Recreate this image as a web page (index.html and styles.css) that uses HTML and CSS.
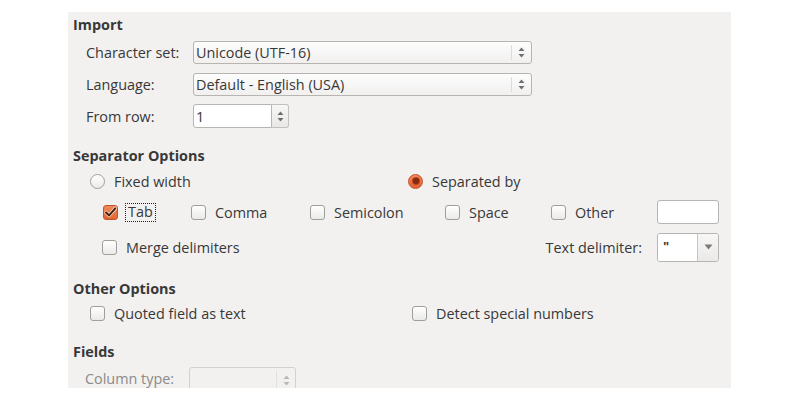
FILE: index.html
```html
<!DOCTYPE html>
<html>
<head>
<meta charset="utf-8">
<link rel="stylesheet" href="styles.css">
</head>
<body>
<div class="panel">
  <div class="heading">Import</div>
  <div class="form-row">
    <span class="label">Character set:</span>
    <div class="combo combo-wide">
      <span class="combo-text">Unicode (UTF-16)</span>
      <span class="combo-btn"><svg width="7" height="13" viewBox="0 0 7 13"><polygon points="0.5,5 3.5,1.5 6.5,5" fill="#6e6e6e"/><polygon points="0.5,8 3.5,11.5 6.5,8" fill="#6e6e6e"/></svg></span>
    </div>
  </div>
  <div class="form-row">
    <span class="label">Language:</span>
    <div class="combo combo-wide">
      <span class="combo-text">Default - English (USA)</span>
      <span class="combo-btn"><svg width="7" height="13" viewBox="0 0 7 13"><polygon points="0.5,5 3.5,1.5 6.5,5" fill="#6e6e6e"/><polygon points="0.5,8 3.5,11.5 6.5,8" fill="#6e6e6e"/></svg></span>
    </div>
  </div>
  <div class="form-row">
    <span class="label">From row:</span>
    <div class="spin">
      <span class="spin-entry">1</span>
      <span class="spin-btn"><svg width="7" height="13" viewBox="0 0 7 13"><polygon points="0.5,5 3.5,1.5 6.5,5" fill="#6e6e6e"/><polygon points="0.5,8 3.5,11.5 6.5,8" fill="#6e6e6e"/></svg></span>
    </div>
  </div>

  <div class="heading sep-heading">Separator Options</div>
  <div class="radio-row">
    <label class="opt"><span class="radio"></span>Fixed width</label>
    <label class="opt"><span class="radio on"><span class="dot"></span></span>Separated by</label>
  </div>
  <div class="check-row">
    <label class="opt"><span class="check on"><svg width="15" height="15" viewBox="0 0 15 15"><path d="M3 7.4 L6.2 10.4 L12.2 3.4" fill="none" stroke="#fbe3d6" stroke-width="3.4" stroke-linecap="round" stroke-linejoin="round"/><path d="M3 7.4 L6.2 10.4 L12.2 3.4" fill="none" stroke="#45200f" stroke-width="2" stroke-linecap="round" stroke-linejoin="round"/></svg></span><span class="focus">Tab</span></label>
    <label class="opt"><span class="check"></span>Comma</label>
    <label class="opt"><span class="check"></span>Semicolon</label>
    <label class="opt"><span class="check"></span>Space</label>
    <label class="opt"><span class="check"></span>Other</label>
    <span class="entry"></span>
  </div>
  <div class="merge-row">
    <label class="opt"><span class="check"></span>Merge delimiters</label>
    <span class="delim-label">Text delimiter:</span>
    <div class="delim-combo">
      <span class="delim-entry">"</span>
      <span class="delim-btn"><svg width="9" height="6" viewBox="0 0 9 6"><polygon points="0.5,0.5 8.5,0.5 4.5,5.5" fill="#7a7a7a"/></svg></span>
    </div>
  </div>

  <div class="heading other-heading">Other Options</div>
  <div class="quoted-row">
    <label class="opt"><span class="check"></span>Quoted field as text</label>
    <label class="opt"><span class="check"></span>Detect special numbers</label>
  </div>

  <div class="heading fields-heading">Fields</div>
  <div class="column-row">
    <span class="col-label">Column type:</span>
    <div class="combo combo-disabled">
      <span class="combo-text"></span>
      <span class="combo-btn"><svg width="7" height="13" viewBox="0 0 7 13"><polygon points="0.5,5 3.5,1.5 6.5,5" fill="#b8b8b8"/><polygon points="0.5,8 3.5,11.5 6.5,8" fill="#b8b8b8"/></svg></span>
    </div>
  </div>
</div>
</body>
</html>
```

FILE: styles.css
```css
* { box-sizing: border-box; }
html, body { margin: 0; padding: 0; background: #ffffff; }
body {
  font-family: "Open Sans", "Liberation Sans", sans-serif;
  font-size: 14.4px;
  color: #383838;
}
.panel {
  margin: 12px 0 0 68px;
  width: 663px;
  height: 376px;
  background: #f2f1f0;
  overflow: hidden;
  padding-left: 5px;
}
.heading {
  height: 24px;
  display: flex;
  align-items: center;
  font-weight: bold;
}
.sep-heading { margin-top: 11px; }
.other-heading { margin-top: 11px; }
.fields-heading { margin-top: 13px; }

.form-row {
  height: 32px;
  display: flex;
  align-items: center;
  padding-left: 13px;
}
.label { width: 107px; }

.combo {
  display: flex;
  height: 23px;
  border: 1px solid #b7b5b1;
  border-radius: 3px;
  background: linear-gradient(#fdfdfd, #f1f0ef);
}
.combo-wide { width: 339px; }
.combo-text {
  flex: 1;
  display: flex;
  align-items: center;
  padding-left: 2px;
}
.combo-btn {
  width: 20px;
  display: flex;
  align-items: center;
  justify-content: center;
  border-left: 1px solid #dddbd8;
  margin: 3px 0;
}
.combo-disabled {
  width: 107px;
  margin-top: 4px;
  border-color: #d3d1ce;
  background: #f2f1f0;
}
.combo-disabled .combo-btn { border-left-color: #e2e0dd; width: 19px; margin-bottom: 0; }

.spin {
  display: flex;
  height: 24px;
}
.spin-entry {
  width: 79px;
  background: #ffffff;
  border: 1px solid #b7b5b1;
  border-radius: 3px 0 0 3px;
  display: flex;
  align-items: center;
  padding-left: 2px;
}
.spin-btn {
  width: 17px;
  border: 1px solid #c2c0bc;
  border-left: none;
  border-radius: 0 3px 3px 0;
  background: linear-gradient(#f7f7f6, #e9e8e6);
  display: flex;
  align-items: center;
  justify-content: center;
}

.opt {
  display: flex;
  align-items: center;
  white-space: nowrap;
}
.radio, .check {
  flex: none;
  width: 15px;
  height: 15px;
  margin-right: 9px;
  border: 1px solid #a09e9b;
  background: linear-gradient(#ffffff, #eaeae9);
  display: flex;
  align-items: center;
  justify-content: center;
}
.radio { border-radius: 50%; }
.check { border-radius: 3px; }
.radio.on {
  border-color: #c24f28;
  background: linear-gradient(#f28b5d, #e2602c);
}
.radio .dot {
  width: 6px;
  height: 6px;
  border-radius: 50%;
  background: #86290f;
  box-shadow: 0 0 0 1px #b8431f;
}
.check.on {
  border-color: #c4522a;
  background: linear-gradient(#f1895b, #e3652f);
}
.check.on svg { display: block; flex: none; }
.focus {
  border: 1px dotted #222;
  padding: 1px 2px 2px 2px;
  margin-left: -2px;
  line-height: 14px;
}

.radio-row {
  height: 28px;
  display: grid;
  grid-template-columns: 318px auto;
  align-items: center;
  padding-left: 17px;
}
.check-row {
  height: 34px;
  display: grid;
  grid-template-columns: 88px 119px 135px 106px 106px 62px;
  align-items: center;
  padding-left: 30px;
}
.entry {
  height: 24px;
  background: #ffffff;
  border: 1px solid #b7b5b1;
  border-radius: 3px;
}
.merge-row {
  height: 36px;
  display: flex;
  align-items: center;
  padding-left: 29px;
  padding-right: 12px;
}
.delim-label { margin-left: auto; margin-right: 15px; }
.delim-combo {
  display: flex;
  width: 62px;
  height: 29px;
  border: 1px solid #b7b5b1;
  border-radius: 3px;
  overflow: hidden;
}
.delim-entry {
  flex: 1;
  background: #ffffff;
  padding: 5px 0 0 5px;
  font-size: 13px;
  line-height: 14px;
  font-weight: bold;
  color: #333;
}
.delim-btn {
  width: 21px;
  border-left: 1px solid #c9c7c3;
  background: linear-gradient(#f7f7f6, #eae9e7);
  display: flex;
  align-items: center;
  justify-content: center;
}

.quoted-row {
  height: 26px;
  display: grid;
  grid-template-columns: 322px auto;
  align-items: center;
  padding-left: 17px;
}
.column-row {
  display: flex;
  align-items: flex-start;
  padding-left: 12px;
}
.col-label {
  width: 104px;
  color: #8a8a8a;
  margin-top: 6px;
}
```
